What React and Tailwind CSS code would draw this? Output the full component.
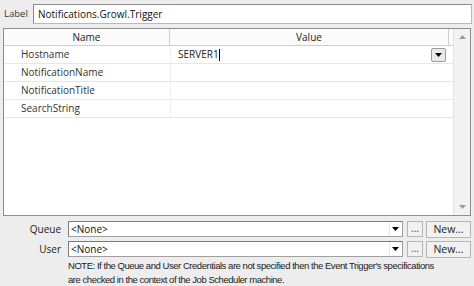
import React from "react";

const rows = [
  { name: "Hostname", value: "SERVER1", active: true },
  { name: "NotificationName", value: "" },
  { name: "NotificationTitle", value: "" },
  { name: "SearchString", value: "" },
];

function Arrow({ up }) {
  return (
    <svg width="7" height="4" viewBox="0 0 7 4">
      <path d={up ? "M0 4 L3.5 0 L7 4 Z" : "M0 0 L7 0 L3.5 4 Z"} fill="currentColor" />
    </svg>
  );
}

function Combo({ text }) {
  return (
    <div className="flex items-center h-[16px]">
      <div className="flex items-center w-[335px] h-full bg-white border border-[#a0a0a0] border-t-[#7a7a7a] border-l-[#7a7a7a]">
        <span className="flex-1 pl-[2px] text-[10px] text-[#111] leading-none">{text}</span>
        <div className="w-[12px] h-full flex items-center justify-center text-black border-l border-[#e6e6e6] mr-[1px]">
          <Arrow />
        </div>
      </div>
      <button className="ml-[4px] w-[16px] h-[16px] bg-[#f1f1f1] border border-[#b5b5b5] text-[10px] leading-none text-[#444] flex items-end justify-center pb-[3px]">
        ...
      </button>
      <button className="ml-[3px] w-[45px] h-[17px] bg-[#f1f1f1] border border-[#b5b5b5] text-[10.5px] leading-none text-[#222]">
        New...
      </button>
    </div>
  );
}

export default function App() {
  return (
    <div
      className="w-[474px] h-[286px] bg-[#ededed] overflow-hidden text-[#222]"
      style={{ fontFamily: "'Open Sans', 'Noto Sans', sans-serif" }}
    >
      {/* label */}
      <div className="flex items-center h-[28px] pl-[4px]">
        <span className="w-[29px] text-[9.5px] text-[#333]">Label</span>
        <div className="flex items-center w-[439px] h-[20px] bg-white border border-[#b9b9b9] border-t-[#8a8a8a] border-l-[#8a8a8a] pl-[4px] text-[10px] text-[#111]">
          Notifications.Growl.Trigger
        </div>
      </div>

      {/* property grid */}
      <div className="ml-[3px] w-[468px] h-[188px] bg-white border border-[#8e8e8e] flex">
        <div className="flex-1 flex flex-col">
          <div className="flex h-[17px] border-b border-[#cfcfcf] bg-[#fbfbfb] text-[10px] text-[#222]">
            <div className="w-[166px] flex items-center justify-center border-r border-[#cfcfcf]">Name</div>
            <div className="w-[279px] flex items-center justify-center border-r border-[#cfcfcf]">Value</div>
            <div className="flex-1" />
          </div>
          {rows.map((r) => (
            <div key={r.name} className="flex h-[18px] border-b border-[#e6e6e6] text-[10px]">
              <div className="w-[166px] flex items-center pl-[17px] text-[#333]">{r.name}</div>
              <div className="w-[279px] flex items-center pl-[7px] text-[#222] border-l border-[#f0f0f0]">
                {r.value}
                {r.active && <span className="w-px h-[12px] bg-black" />}
                {r.active && (
                  <div className="ml-auto mr-[3px] w-[15px] h-[14px] flex items-center justify-center border border-[#9a9a9a] rounded-[2px] bg-[#eaeaea] text-black">
                    <Arrow />
                  </div>
                )}
              </div>
            </div>
          ))}
        </div>
        <div className="w-[17px] bg-[#f2f2f2] border-l border-[#e2e2e2] flex flex-col justify-between items-center py-[6px] text-[#9a9a9a]">
          <Arrow up />
          <Arrow />
        </div>
      </div>

      {/* queue / user */}
      <div className="flex flex-col gap-[4px] mt-[5px]">
        <div className="flex items-center">
          <span className="w-[62px] text-right pr-[1px] text-[10px] text-[#222]">Queue</span>
          <div className="ml-[6px]">
            <Combo text="<None>" />
          </div>
        </div>
        <div className="flex items-center">
          <span className="w-[62px] text-right pr-[1px] text-[10px] text-[#222]">User</span>
          <div className="ml-[6px]">
            <Combo text="<None>" />
          </div>
        </div>
      </div>

      <p
        className="ml-[68px] mt-[2px] text-[9.5px] tracking-[-0.46px] leading-[14px] text-[#222] whitespace-nowrap"
        style={{ fontFamily: "'Liberation Sans', Arial, sans-serif" }}
      >
        NOTE: If the Queue and User Credentials are not specified then the Event Trigger's specifications
        <br />
        are checked in the context of the Job Scheduler machine.
      </p>
    </div>
  );
}
